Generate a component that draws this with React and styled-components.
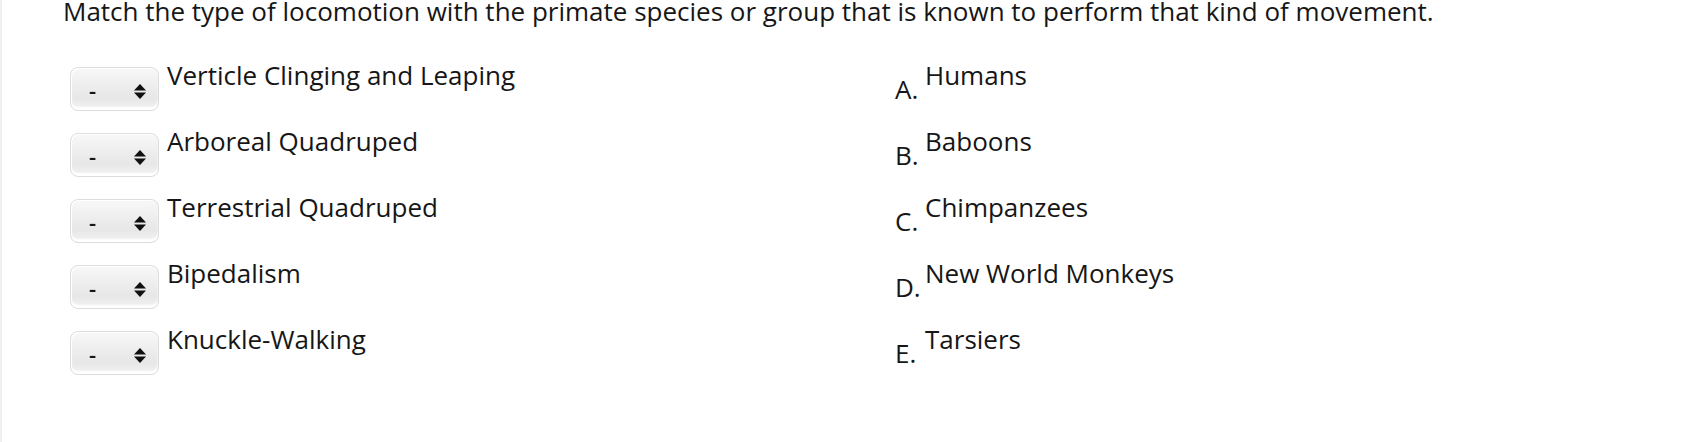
import React from "react";
import styled, { createGlobalStyle } from "styled-components";

const GlobalStyle = createGlobalStyle`
  html, body {
    margin: 0;
    padding: 0;
    background: #ffffff;
  }
  body {
    font-family: "Open Sans", "Noto Sans", sans-serif;
    color: #161616;
  }
`;

const Page = styled.div`
  min-height: 442px;
  box-sizing: border-box;
  border-left: 2px solid #f0f0f0;
  padding: 0 0 0 61px;
`;

const Prompt = styled.p`
  margin: 0;
  font-size: 26px;
  line-height: 26px;
  position: relative;
  top: -2px;
`;

const Board = styled.div`
  display: grid;
  grid-template-columns: 832px 1fr;
  margin-top: 41px;
`;

const Column = styled.div`
  display: flex;
  flex-direction: column;
  gap: 22px;
`;

const Row = styled.div`
  display: flex;
  align-items: flex-start;
  height: 44px;
`;

const SelectBox = styled.div`
  width: 89px;
  height: 44px;
  box-sizing: border-box;
  margin-left: 7px;
  margin-right: 8px;
  border: 1px solid #dddddd;
  border-radius: 8px;
  background: linear-gradient(#f8f8f8 0%, #eeeeee 40%, #e7e7e7 72%, #f3f3f3 100%);
  box-shadow: inset 0 -3px 2px #ffffff, inset 1px 1px 0 #ffffff;
  display: flex;
  align-items: center;
  justify-content: space-between;
  padding: 0 12px 0 18px;
`;

const Dash = styled.span`
  font-size: 22px;
  font-weight: 600;
  line-height: 1;
  margin-top: 2px;
`;

const Arrows = styled.svg`
  width: 12px;
  height: 15px;
  margin-top: 4px;
`;

const Label = styled.span`
  font-size: 26px;
  line-height: 26px;
  margin-top: -5px;
`;

const Letter = styled.span`
  font-size: 26px;
  line-height: 26px;
  margin-top: 9px;
  width: 30px;
`;

const left = [
  "Verticle Clinging and Leaping",
  "Arboreal Quadruped",
  "Terrestrial Quadruped",
  "Bipedalism",
  "Knuckle-Walking",
];

const right = [
  ["A.", "Humans"],
  ["B.", "Baboons"],
  ["C.", "Chimpanzees"],
  ["D.", "New World Monkeys"],
  ["E.", "Tarsiers"],
];

const App = () => {
  return (
    <>
      <GlobalStyle />
      <Page>
        <Prompt>
          Match the type of locomotion with the primate species or group that is known to perform that kind of movement.
        </Prompt>
        <Board>
          <Column>
            {left.map((text) => (
              <Row key={text}>
                <SelectBox>
                  <Dash>-</Dash>
                  <Arrows viewBox="0 0 12 15">
                    <polygon points="6,0 12,6.5 0,6.5" fill="#111" />
                    <polygon points="0,8.5 12,8.5 6,15" fill="#111" />
                  </Arrows>
                </SelectBox>
                <Label>{text}</Label>
              </Row>
            ))}
          </Column>
          <Column>
            {right.map(([letter, text]) => (
              <Row key={letter}>
                <Letter>{letter}</Letter>
                <Label>{text}</Label>
              </Row>
            ))}
          </Column>
        </Board>
      </Page>
    </>
  );
};

export default App;
